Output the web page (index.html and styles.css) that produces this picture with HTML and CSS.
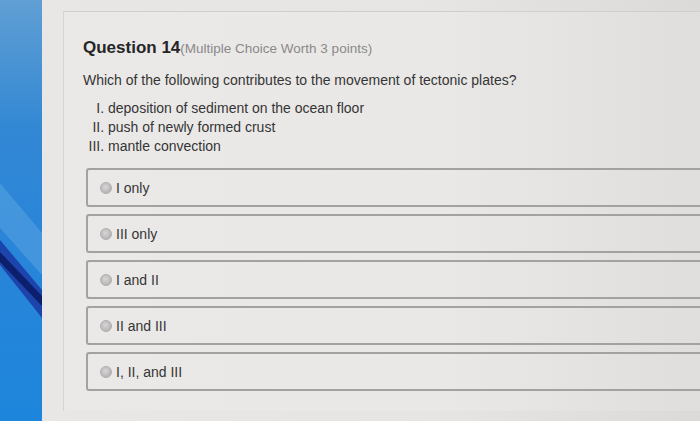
FILE: index.html
```html
<!DOCTYPE html>
<html>
<head>
<meta charset="utf-8">
<link rel="stylesheet" href="styles.css">
</head>
<body>
<div class="screen">
  <div class="wallpaper">
    <svg width="42" height="421" viewBox="0 0 42 421" preserveAspectRatio="none">
      <defs>
        <linearGradient id="bg" x1="0" y1="0" x2="0" y2="1">
          <stop offset="0" stop-color="#609fd4"/>
          <stop offset="0.3" stop-color="#3388d4"/>
          <stop offset="0.55" stop-color="#2a85d8"/>
          <stop offset="1" stop-color="#1d86dc"/>
        </linearGradient>
      </defs>
      <rect width="42" height="421" fill="url(#bg)"/>
      <polygon points="0,183 42,233 42,275 0,228" fill="#4f9ddf" opacity="0.7"/>
      <polygon points="0,240 42,290 42,318 0,265" fill="#1d44ac"/>
      <polygon points="0,252 42,296 42,306 0,262" fill="#0c1f6c"/>
    </svg>
  </div>
  <div class="page">
    <div class="card">
      <h1 class="title">Question 14<span class="meta">(Multiple Choice Worth 3 points)</span></h1>
      <p class="prompt">Which of the following contributes to the movement of tectonic plates?</p>
      <ol class="items">
        <li>deposition of sediment on the ocean floor</li>
        <li>push of newly formed crust</li>
        <li>mantle convection</li>
      </ol>
      <div class="options">
        <label class="option"><span class="radio"></span>I only</label>
        <label class="option"><span class="radio"></span>III only</label>
        <label class="option"><span class="radio"></span>I and II</label>
        <label class="option"><span class="radio"></span>II and III</label>
        <label class="option"><span class="radio"></span>I, II, and III</label>
      </div>
    </div>
  </div>
</div>
</body>
</html>
```
FILE: styles.css
```css
html, body {
  margin: 0;
  padding: 0;
  width: 700px;
  height: 421px;
  overflow: hidden;
}
body {
  font-family: "Liberation Sans", Arial, sans-serif;
  background: #e6e4e4;
}
.screen {
  display: flex;
  height: 421px;
}
.wallpaper {
  width: 42px;
  flex: none;
  line-height: 0;
}
.page {
  flex: 1;
  padding: 11px 0 0 21px;
  background: linear-gradient(90deg, #e9e6e6 0%, #e7e5e4 60%, #dcdad9 100%);
  overflow: hidden;
}
.card {
  width: 700px;
  height: 400px;
  border-top: 1px solid #d0cece;
  border-left: 1px solid #d6d4d4;
  background: linear-gradient(90deg, #ebe9e8 0%, #e9e8e6 55%, #dedcdb 100%);
  padding: 26px 0 0 19px;
  box-sizing: border-box;
}
.title {
  margin: 0;
  font-size: 17px;
  line-height: 20px;
  font-weight: bold;
  color: #262626;
}
.meta {
  font-size: 13.5px;
  font-weight: normal;
  color: #8a8888;
}
.prompt {
  margin: 12px 0 0;
  font-size: 14px;
  line-height: 18px;
  color: #353535;
}
.items {
  margin: 10px 0 0;
  padding-left: 25px;
  list-style: upper-roman;
  font-size: 14px;
  line-height: 19px;
  color: #353535;
}
.options {
  margin: 12px 0 0 3px;
  display: flex;
  flex-direction: column;
  gap: 7px;
}
.option {
  display: flex;
  align-items: center;
  height: 39px;
  box-sizing: border-box;
  border: 2px solid #a3a1a1;
  border-right: none;
  border-radius: 3px 0 0 3px;
  padding-left: 12px;
  font-size: 14px;
  color: #353535;
  background: transparent;
}
.radio {
  width: 10px;
  height: 10px;
  border-radius: 50%;
  border: 1px solid #b0aeae;
  background: radial-gradient(circle at 45% 40%, #d8d6d6, #aaa8a8);
  margin-right: 4px;
  flex: none;
}
```
